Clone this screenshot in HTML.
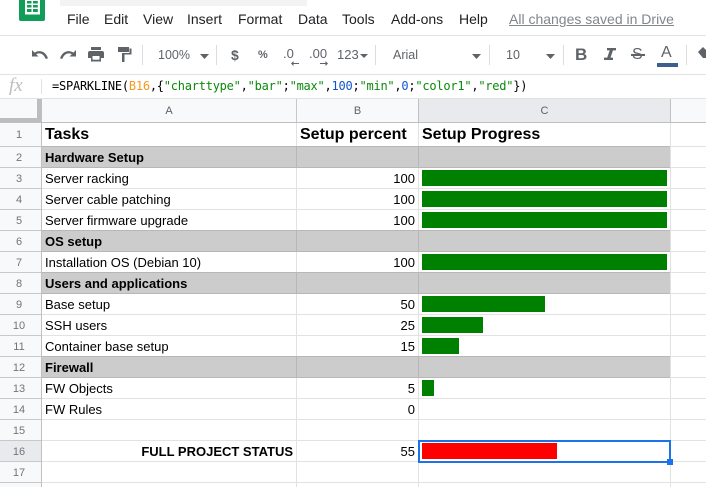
<!DOCTYPE html>
<html><head><meta charset="utf-8">
<style>
html,body{margin:0;padding:0;background:#fff}
#p{position:relative;width:706px;height:487px;overflow:hidden;background:#fff;font-family:"Liberation Sans",sans-serif;color:#000}
#p div,#p svg{position:absolute}
.m{top:10px;font-size:14px;line-height:18px;color:#202124;white-space:nowrap}
.tb{font-size:12px;line-height:16px;color:#5f6368;white-space:nowrap}
.sep{width:1px;height:20px;top:45px;background:#dadce0}
.h{background:#e2e2e2}
.rh{left:0;width:41px;height:1px;background:#c8c8c8}
.rn{left:0;width:38px;text-align:center;font-size:11px;line-height:20px;color:#70757a}
.ch{text-align:center;font-size:11px;line-height:20px;color:#5f6368}
.g{left:42px;width:628px;height:22px;background:#ccc;border-top:1px solid #b7b7b7;border-bottom:1px solid #b7b7b7;box-sizing:border-box}
.gv{width:1px;height:22px;background:#b7b7b7}
.t{left:45px;font-size:13px;line-height:20px;white-space:nowrap}
.b{font-weight:bold}
.n{left:297px;width:118px;text-align:right;font-size:13px;line-height:20px}
.bar{left:422px;height:16px;background:#008000}
.f{top:77px;font-family:"DejaVu Sans Mono","Liberation Mono",monospace;font-size:12px;letter-spacing:-.24px;line-height:18px;white-space:pre}
</style></head><body>
<div id="p">
<!-- logo -->
<div style="left:19px;top:0;width:26px;height:21px;background:#0f9d58;border-radius:0 0 2px 2px"></div>
<svg style="left:25px;top:0" width="15" height="15" viewBox="0 0 15 15"><rect width="15" height="14.5" fill="#fff"/><path d="M2 1h4.500v2.500H2zM8 1h4.800v2.500H8zM2 5h4.500v2.500H2zM8 5h4.800v2.500H8zM2 9h4.500v3H2zM8 9h4.800v3H8z" fill="#0f9d58"/></svg>
<div style="left:60px;top:0;width:247px;height:6px;background:#f3f3f3"></div>
<!-- menu -->
<div class="m" style="left:67px">File</div>
<div class="m" style="left:104px">Edit</div>
<div class="m" style="left:143px">View</div>
<div class="m" style="left:187px">Insert</div>
<div class="m" style="left:238px">Format</div>
<div class="m" style="left:298px">Data</div>
<div class="m" style="left:342px">Tools</div>
<div class="m" style="left:391px">Add-ons</div>
<div class="m" style="left:459px">Help</div>
<div class="m" style="left:509px;color:#80868b;text-decoration:underline">All changes saved in Drive</div>
<div class="h" style="left:0;top:35px;width:706px;height:1px"></div>
<!-- toolbar -->
<svg style="left:32px;top:50px" width="16" height="9" viewBox="0 0 16 9"><path d="M0 0v6.500h6.500L4.200 4.200C6.800 2.600 11.200 2.800 13.800 9L16 8.200C13.500 1.200 7.500-.6 2.600 2.600z" fill="#5f6368"/></svg>
<svg style="left:60px;top:50px" width="16" height="9" viewBox="0 0 16 9"><path d="M16 0v6.500H9.500l2.300-2.300C9.200 2.600 4.800 2.800 2.200 9L0 8.200C2.500 1.200 8.500-.6 13.400 2.600z" fill="#5f6368"/></svg>
<svg style="left:88px;top:47px" width="16" height="15" viewBox="0 0 16 15"><path d="M3 0h10v3H3zM2 4h12a2 2 0 0 1 2 2v5h-3v3.500H3V11H0V6a2 2 0 0 1 2-2z" fill="#5f6368"/><rect x="4.500" y="9" width="7" height="3.700" fill="#fff"/></svg>
<svg style="left:118px;top:47px" width="14" height="15" viewBox="0 0 14 15"><path d="M0 0h11v5H0zM11.500 1.500H13.500V7.500H6.500V15H4V6h7.500z" fill="#5f6368"/></svg>
<div class="sep" style="left:142px"></div>
<div class="tb" style="left:158px;top:47px;font-size:12.500px">100%</div>
<svg style="left:200px;top:54px" width="9" height="5"><path d="M0 0h9L4.500 5z" fill="#5f6368"/></svg>
<div class="sep" style="left:216px"></div>
<div class="tb b" style="left:231px;top:47px;font-size:14px">$</div>
<div class="tb b" style="left:258px;top:47px;font-size:11px">%</div>
<div class="tb" style="left:283px;top:46px;font-size:13px">.0</div>
<svg style="left:291px;top:61px" width="8" height="5"><path d="M8 2H2.500V0L0 2.500 2.500 5V3H8z" fill="#5f6368"/></svg>
<div class="tb" style="left:309px;top:46px;font-size:13px">.00</div>
<svg style="left:320px;top:61px" width="8" height="5"><path d="M0 2h5.500V0L8 2.500 5.500 5V3H0z" fill="#5f6368"/></svg>
<div class="tb" style="left:337px;top:47px;font-size:13px">123</div>
<svg style="left:360px;top:54px" width="8" height="4"><path d="M0 0h8L4 4z" fill="#5f6368"/></svg>
<div class="sep" style="left:375px"></div>
<div class="tb" style="left:393px;top:47px;font-size:12.500px">Arial</div>
<svg style="left:472px;top:54px" width="9" height="5"><path d="M0 0h9L4.500 5z" fill="#5f6368"/></svg>
<div class="sep" style="left:489px"></div>
<div class="tb" style="left:506px;top:47px;font-size:12.500px">10</div>
<svg style="left:546px;top:54px" width="9" height="5"><path d="M0 0h9L4.500 5z" fill="#5f6368"/></svg>
<div class="sep" style="left:563px"></div>
<div class="tb b" style="left:575px;top:45px;font-size:17px;line-height:20px">B</div>
<svg style="left:604px;top:48px" width="12" height="12" viewBox="0 0 12 12"><path d="M3 0h9v2.400H9L6.500 9.600H9V12H0V9.600h3.200L5.700 2.400H3z" fill="#5f6368"/></svg>
<div class="tb" style="left:632px;top:45px;font-size:16px;line-height:20px">S</div>
<div style="left:631px;top:54px;width:14px;height:1.500px;background:#5f6368"></div>
<div class="tb" style="left:661px;top:44px;font-size:16px;line-height:18px">A</div>
<div style="left:657px;top:63px;width:21px;height:4px;background:#3d5f8f"></div>
<div class="sep" style="left:686px"></div>
<svg style="left:698px;top:46px" width="8" height="16" viewBox="0 0 8 16"><path d="M0 6L5 1l3 3v8H5z" fill="#5f6368"/></svg>
<div class="h" style="left:0;top:74px;width:706px;height:1px"></div>
<!-- formula bar -->
<div style="left:9px;top:75px;font-family:'Liberation Serif',serif;font-style:italic;font-size:19px;line-height:22px;color:#bdbdbd">fx</div>
<div class="h" style="left:41px;top:79px;width:1px;height:15px"></div>
<div class="f" style="left:52px"><span>=SPARKLINE(</span><span style="color:#f7981d">B16</span><span>,{</span><span style="color:#0a8a0a">"charttype"</span><span>,</span><span style="color:#0a8a0a">"bar"</span><span>;</span><span style="color:#0a8a0a">"max"</span><span>,</span><span style="color:#1155cc">100</span><span>;</span><span style="color:#0a8a0a">"min"</span><span>,</span><span style="color:#1155cc">0</span><span>;</span><span style="color:#0a8a0a">"color1"</span><span>,</span><span style="color:#0a8a0a">"red"</span><span>})</span></div>
<div class="h" style="left:0;top:98px;width:706px;height:1px"></div>
<!-- headers -->
<div style="left:0;top:99px;width:706px;height:23px;background:#f8f9fa"></div>
<div style="left:419px;top:99px;width:251px;height:23px;background:#e8eaed"></div>
<div style="left:37px;top:99px;width:4px;height:23px;background:#bdbdbd"></div>
<div style="left:0;top:118px;width:41px;height:4px;background:#bdbdbd"></div>
<div style="left:0;top:122px;width:41px;height:365px;background:#f8f9fa"></div>
<div style="left:0;top:441px;width:41px;height:20px;background:#e8eaed"></div>
<div class="ch" style="left:42px;top:101px;width:254px">A</div>
<div class="ch" style="left:297px;top:101px;width:121px">B</div>
<div class="ch" style="left:419px;top:101px;width:251px">C</div>
<!-- grid -->
<div style="left:41px;top:99px;width:1px;height:388px;background:#c0c0c0"></div>
<div class="h" style="left:296px;top:122px;width:1px;height:365px"></div>
<div class="h" style="left:418px;top:122px;width:1px;height:365px"></div>
<div class="h" style="left:670px;top:122px;width:1px;height:365px"></div>
<div style="left:296px;top:99px;width:1px;height:23px;background:#c8c8c8"></div>
<div style="left:418px;top:99px;width:1px;height:23px;background:#c0c0c0"></div>
<div style="left:670px;top:99px;width:1px;height:23px;background:#c0c0c0"></div>
<div class="h" style="left:42px;top:167px;width:664px;height:1px"></div>
<div class="h" style="left:42px;top:188px;width:664px;height:1px"></div>
<div class="h" style="left:42px;top:209px;width:664px;height:1px"></div>
<div class="h" style="left:42px;top:230px;width:664px;height:1px"></div>
<div class="h" style="left:42px;top:146px;width:664px;height:1px"></div>
<div class="h" style="left:42px;top:251px;width:664px;height:1px"></div>
<div class="h" style="left:42px;top:272px;width:664px;height:1px"></div>
<div class="h" style="left:42px;top:293px;width:664px;height:1px"></div>
<div class="h" style="left:42px;top:314px;width:664px;height:1px"></div>
<div class="h" style="left:42px;top:335px;width:664px;height:1px"></div>
<div class="h" style="left:42px;top:356px;width:664px;height:1px"></div>
<div class="h" style="left:42px;top:377px;width:664px;height:1px"></div>
<div class="h" style="left:42px;top:398px;width:664px;height:1px"></div>
<div class="h" style="left:42px;top:419px;width:664px;height:1px"></div>
<div class="h" style="left:42px;top:440px;width:664px;height:1px"></div>
<div class="h" style="left:42px;top:461px;width:664px;height:1px"></div>
<div class="h" style="left:42px;top:482px;width:664px;height:1px"></div>
<div class="rh" style="top:146px"></div><div class="rh" style="top:167px"></div><div class="rh" style="top:188px"></div><div class="rh" style="top:209px"></div><div class="rh" style="top:230px"></div><div class="rh" style="top:251px"></div><div class="rh" style="top:272px"></div><div class="rh" style="top:293px"></div><div class="rh" style="top:314px"></div><div class="rh" style="top:335px"></div><div class="rh" style="top:356px"></div><div class="rh" style="top:377px"></div><div class="rh" style="top:398px"></div><div class="rh" style="top:419px"></div><div class="rh" style="top:440px"></div><div class="rh" style="top:461px"></div><div class="rh" style="top:482px"></div>
<div style="left:0;top:122px;width:706px;height:1px;background:#c0c0c0"></div>
<!-- gray rows -->
<div class="g" style="top:146px"></div><div class="gv" style="left:296px;top:146px"></div><div class="gv" style="left:418px;top:146px"></div>
<div class="g" style="top:230px"></div><div class="gv" style="left:296px;top:230px"></div><div class="gv" style="left:418px;top:230px"></div>
<div class="g" style="top:272px"></div><div class="gv" style="left:296px;top:272px"></div><div class="gv" style="left:418px;top:272px"></div>
<div class="g" style="top:356px"></div><div class="gv" style="left:296px;top:356px"></div><div class="gv" style="left:418px;top:356px"></div>
<!-- row numbers -->
<div class="rn" style="top:125px">1</div>
<div class="rn" style="top:148px">2</div>
<div class="rn" style="top:169px">3</div>
<div class="rn" style="top:190px">4</div>
<div class="rn" style="top:211px">5</div>
<div class="rn" style="top:232px">6</div>
<div class="rn" style="top:253px">7</div>
<div class="rn" style="top:274px">8</div>
<div class="rn" style="top:295px">9</div>
<div class="rn" style="top:316px">10</div>
<div class="rn" style="top:337px">11</div>
<div class="rn" style="top:358px">12</div>
<div class="rn" style="top:379px">13</div>
<div class="rn" style="top:400px">14</div>
<div class="rn" style="top:421px">15</div>
<div class="rn" style="top:442px">16</div>
<div class="rn" style="top:463px">17</div>
<!-- text -->
<div class="t b" style="top:124px;font-size:16px;line-height:22px">Tasks</div>
<div class="t b" style="left:300px;top:124px;font-size:16px;line-height:22px">Setup percent</div>
<div class="t b" style="left:422px;top:124px;font-size:16px;line-height:22px">Setup Progress</div>
<div class="t b" style="top:148px">Hardware Setup</div>
<div class="t" style="top:169px">Server racking</div>
<div class="t" style="top:190px">Server cable patching</div>
<div class="t" style="top:211px">Server firmware upgrade</div>
<div class="t b" style="top:232px">OS setup</div>
<div class="t" style="top:253px">Installation OS (Debian 10)</div>
<div class="t b" style="top:274px">Users and applications</div>
<div class="t" style="top:295px">Base setup</div>
<div class="t" style="top:316px">SSH users</div>
<div class="t" style="top:337px">Container base setup</div>
<div class="t b" style="top:358px">Firewall</div>
<div class="t" style="top:379px">FW Objects</div>
<div class="t" style="top:400px">FW Rules</div>
<div class="t b" style="left:42px;width:251px;text-align:right;top:442px">FULL PROJECT STATUS</div>
<div class="n" style="top:169px">100</div>
<div class="n" style="top:190px">100</div>
<div class="n" style="top:211px">100</div>
<div class="n" style="top:253px">100</div>
<div class="n" style="top:295px">50</div>
<div class="n" style="top:316px">25</div>
<div class="n" style="top:337px">15</div>
<div class="n" style="top:379px">5</div>
<div class="n" style="top:400px">0</div>
<div class="n" style="top:442px">55</div>
<!-- bars -->
<div class="bar" style="top:170px;width:245px"></div>
<div class="bar" style="top:191px;width:245px"></div>
<div class="bar" style="top:212px;width:245px"></div>
<div class="bar" style="top:254px;width:245px"></div>
<div class="bar" style="top:296px;width:122.500px"></div>
<div class="bar" style="top:317px;width:61px"></div>
<div class="bar" style="top:338px;width:37px"></div>
<div class="bar" style="top:380px;width:12px"></div>
<div class="bar" style="top:443px;width:135px;background:#f00"></div>
<!-- selection -->
<div style="left:418px;top:440px;width:249px;height:19px;border:2px solid #1a73e8"></div>
<div style="left:667px;top:459px;width:6px;height:6px;background:#1a73e8"></div>
</div>
</body></html>
